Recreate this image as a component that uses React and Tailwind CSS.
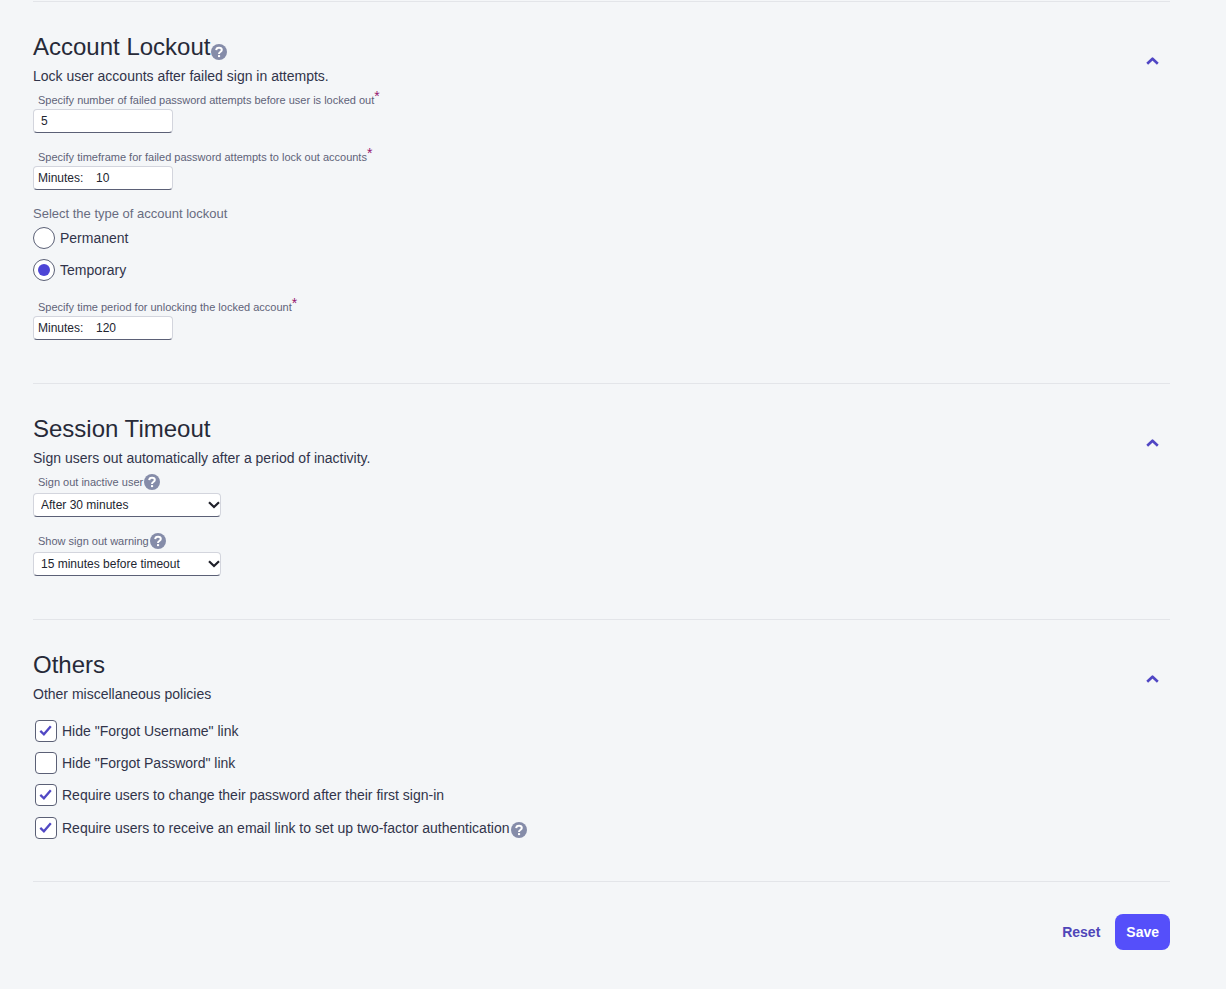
import { useState } from "react";

const boxStyle =
  "h-6 rounded-[4px] border border-[#d3d5dd] border-b-[#5b6076] bg-white text-xs text-[#22252f]";

function Help({ label }) {
  return (
    <button type="button" aria-label={label} className="size-4 shrink-0 text-[#858ca9]">
      <svg viewBox="0 0 16 16" fill="none" className="size-4">
        <circle cx="8" cy="8" r="8" fill="currentColor" />
        <path d="M5.2 6.1C5.3 4.5 6.4 3.7 8 3.7c1.7 0 2.8.9 2.8 2.2 0 1.1-.7 1.6-1.5 2.1-.8.5-1.3.9-1.3 1.9" stroke="#fff" strokeWidth="2" />
        <path d="M7 11.1h2.1v2H7z" fill="#fff" />
      </svg>
    </button>
  );
}

function Section({ title, description, help, className, children }) {
  const [open, setOpen] = useState(true);
  return (
    <section className={"border-t border-[#e3e5e9] pt-7 " + className}>
      <div className="flex items-start justify-between">
        <div>
          <div className="flex items-center gap-px">
            <h2 className="text-2xl leading-[34px] text-[#272a38]">{title}</h2>
            {help && (
              <div className="flex pt-[10px]">
                <Help label={help} />
              </div>
            )}
          </div>
          <p className="text-sm leading-6 text-[#31344a]">{description}</p>
        </div>
        <button
          type="button"
          aria-expanded={open}
          aria-label={"Toggle " + title}
          onClick={() => setOpen(!open)}
          className="mt-3 flex size-9 items-center justify-center text-[#5046c4]"
        >
          <svg viewBox="0 0 16 16" className={"size-4 " + (open ? "" : "rotate-180")} fill="none" stroke="currentColor" strokeWidth="2.6">
            <path d="M3.2 11.7 8.5 6.7l5.3 5" strokeLinejoin="round" />
          </svg>
        </button>
      </div>
      {open && children}
    </section>
  );
}

function NumberField({ id, label, prefix, value }) {
  return (
    <div>
      <label htmlFor={id} className="flex pl-[5px] text-[11px] leading-[17px] text-[#5f6379]">
        {label}
        <span className="-mt-1 text-sm leading-[17px] text-[#96166f]">*</span>
      </label>
      <div className={"flex w-[140px] items-center " + boxStyle}>
        {prefix && <span className="w-[55px] shrink-0 pl-1">{prefix}</span>}
        <input id={id} defaultValue={value} inputMode="numeric" required className="w-full min-w-0 bg-transparent pl-[7px] outline-none" />
      </div>
    </div>
  );
}

function SelectField({ id, label, help, options }) {
  return (
    <div>
      <div className="flex h-[19px] items-start pl-[5px]">
        <label htmlFor={id} className="pr-px text-[11px] leading-[17px] text-[#5f6379]">
          {label}
        </label>
        <Help label={help} />
      </div>
      <div className="grid w-[188px] items-center">
        <select id={id} className={"col-start-1 row-start-1 w-full appearance-none pr-5 pl-[7px] " + boxStyle}>
          {options.map((o) => (
            <option key={o}>{o}</option>
          ))}
        </select>
        <svg viewBox="0 0 12 8" fill="none" stroke="#1f2029" strokeWidth="2.2" className="pointer-events-none col-start-1 row-start-1 mr-px h-2 w-3 justify-self-end">
          <path d="M1 1.2 6 6l5-4.8" />
        </svg>
      </div>
    </div>
  );
}

function Radio({ label, checked }) {
  return (
    <label className="flex h-8 items-center gap-[5px] text-sm text-[#31344a]">
      <input
        type="radio"
        name="lockout-type"
        defaultChecked={checked}
        className="grid size-[22px] appearance-none place-items-center rounded-full border border-[#5b6076] bg-white before:size-3 before:rounded-full checked:before:bg-[#4d45d6]"
      />
      {label}
    </label>
  );
}

function Checkbox({ label, checked }) {
  return (
    <label className="flex h-8 items-center gap-[5px] text-sm text-[#31344a]">
      <span className="grid size-[22px] place-items-center">
        <input
          type="checkbox"
          defaultChecked={checked}
          className="peer col-start-1 row-start-1 size-[22px] appearance-none rounded-[4px] border border-[#5b6076] bg-white"
        />
        <svg viewBox="0 0 22 22" fill="none" stroke="#5148c4" strokeWidth="2.3" className="pointer-events-none invisible col-start-1 row-start-1 size-[22px] peer-checked:visible">
          <path d="M5.3 10.9 8.9 14.3 15.8 6.3" />
        </svg>
      </span>
      {label}
    </label>
  );
}

export default function App() {
  return (
    <main className="min-h-screen bg-[#f4f6f8] pt-px pr-14 pb-10 pl-[33px] font-['Liberation_Sans',Arial,sans-serif]">
      <form onSubmit={(e) => e.preventDefault()}>
        <Section
          title="Account Lockout"
          description="Lock user accounts after failed sign in attempts."
          help="About account lockout"
          className="pb-[43px]"
        >
          <div className="mt-1 flex flex-col gap-4">
            <NumberField id="attempts" label="Specify number of failed password attempts before user is locked out" value="5" />
            <NumberField id="timeframe" label="Specify timeframe for failed password attempts to lock out accounts" prefix="Minutes:" value="10" />
          </div>
          <fieldset className="mt-4 mb-[13px]">
            <legend className="text-[13px] leading-4 text-[#686c80]">Select the type of account lockout</legend>
            <Radio label="Permanent" />
            <Radio label="Temporary" checked />
          </fieldset>
          <NumberField id="unlock" label="Specify time period for unlocking the locked account" prefix="Minutes:" value="120" />
        </Section>

        <Section
          title="Session Timeout"
          description="Sign users out automatically after a period of inactivity."
          className="pb-[43px]"
        >
          <div className="mt-1 flex flex-col gap-4">
            <SelectField id="inactive" label="Sign out inactive user" help="About inactive sign out" options={["After 30 minutes", "After 60 minutes"]} />
            <SelectField id="warning" label="Show sign out warning" help="About sign out warning" options={["15 minutes before timeout", "5 minutes before timeout"]} />
          </div>
        </Section>

        <Section title="Others" description="Other miscellaneous policies" className="pb-[37px]">
          <div className="mt-[9px] pl-0.5">
            <Checkbox label={'Hide "Forgot Username" link'} checked />
            <Checkbox label={'Hide "Forgot Password" link'} />
            <Checkbox label="Require users to change their password after their first sign-in" checked />
            <div className="flex items-center gap-0.5 pt-px">
              <Checkbox label="Require users to receive an email link to set up two-factor authentication" checked />
              <div className="flex pt-1">
                <Help label="About the two-factor email link" />
              </div>
            </div>
          </div>
        </Section>

        <div className="flex justify-end gap-1 border-t border-[#e3e5e9] pt-8 text-sm font-bold">
          <button type="reset" className="h-9 rounded-lg px-[11px] text-[#4f46b8]">
            Reset
          </button>
          <button type="submit" className="h-9 rounded-lg bg-[#554ffa] px-[11px] text-white">
            Save
          </button>
        </div>
      </form>
    </main>
  );
}
